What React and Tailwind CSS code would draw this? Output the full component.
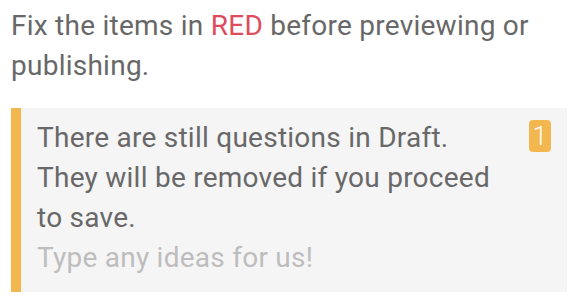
export default function App() {
  return (
    <div className="w-[578px] h-[298px] bg-white px-[11px] pt-[6px]" style={{ fontFamily: "Roboto, 'Noto Sans', sans-serif" }}>
      <p className="text-[28px] leading-[40px] tracking-[0.25px] text-[#686868]">
        Fix the items in <span className="text-[#e04b5c]">RED</span> before previewing or<br />publishing.
      </p>
      <div className="mt-[22px] flex bg-[#f5f5f5] border-l-[10px] border-[#f2b84f] pl-[16px] pr-[16px] pt-[10px] pb-[14px]">
        <div className="flex-1 text-[28px] leading-[40px] tracking-[0.25px]">
          <p className="text-[#686868]">There are still questions in Draft.<br />They will be removed if you proceed<br />to save.</p>
          <p className="text-[#bdbdbd]">Type any ideas for us!</p>
        </div>
        <span className="mt-[2px] h-[32px] w-[22px] rounded-[4px] bg-[#f2b84f] text-white text-[26px] font-light leading-[32px] text-center">1</span>
      </div>
    </div>
  );
}
